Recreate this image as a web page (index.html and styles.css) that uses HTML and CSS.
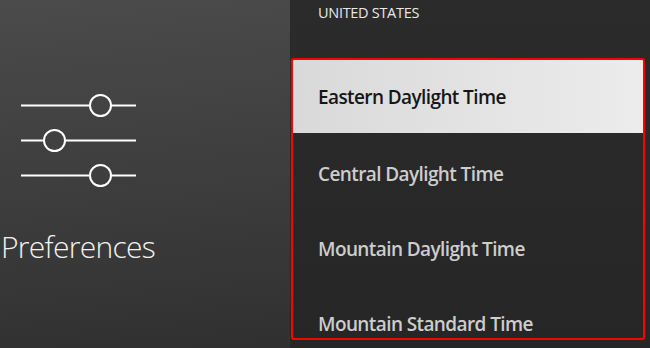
FILE: index.html
```html
<!DOCTYPE html>
<html>
<head>
<meta charset="utf-8">
<link rel="stylesheet" href="styles.css">
</head>
<body>
<div class="screen">
  <div class="side">
    <svg class="icon" width="140" height="100" viewBox="0 0 140 100">
      <g fill="none" stroke="#ffffff" stroke-width="2">
        <line x1="21" y1="15.5" x2="89.5" y2="15.5"/>
        <line x1="111.5" y1="15.5" x2="136" y2="15.5"/>
        <circle cx="100.5" cy="15.5" r="10.5"/>
        <line x1="21" y1="50.5" x2="44" y2="50.5"/>
        <line x1="65" y1="50.5" x2="136" y2="50.5"/>
        <circle cx="54.5" cy="50.5" r="10.5"/>
        <line x1="21" y1="85.5" x2="89.5" y2="85.5"/>
        <line x1="111.5" y1="85.5" x2="136" y2="85.5"/>
        <circle cx="100.5" cy="85.5" r="10.5"/>
      </g>
    </svg>
    <div class="title">Preferences</div>
  </div>
  <div class="main">
    <div class="region">UNITED STATES</div>
    <div class="list">
      <div class="item selected">Eastern Daylight Time</div>
      <div class="item">Central Daylight Time</div>
      <div class="item">Mountain Daylight Time</div>
      <div class="item">Mountain Standard Time</div>
    </div>
  </div>
</div>
</body>
</html>
```
FILE: styles.css
```css
html, body {
  margin: 0;
  padding: 0;
  width: 650px;
  height: 348px;
  overflow: hidden;
  background: #272727;
}
.screen {
  display: flex;
  width: 650px;
  height: 348px;
  font-family: "Open Sans", "Noto Sans", sans-serif;
}
.side {
  width: 290px;
  flex: none;
  background: linear-gradient(175deg, #4b4b4b 0%, #3e3e3e 50%, #303030 100%);
  display: flex;
  flex-direction: column;
  align-items: flex-start;
  padding-top: 90px;
  box-sizing: border-box;
}
.icon {
  display: block;
  flex: none;
}
.title {
  flex: none;
  margin-top: 39px;
  margin-left: 1px;
  font-size: 30px;
  font-weight: 300;
  color: #f2f2f2;
  line-height: 36px;
  letter-spacing: -0.7px;
}
.main {
  flex: 1;
  display: flex;
  flex-direction: column;
  background: linear-gradient(180deg, #2b2b2b 0%, #262626 100%);
}
.region {
  flex: none;
  padding: 3px 0 0 28px;
  height: 58px;
  box-sizing: border-box;
  font-size: 14.5px;
  line-height: 20px;
  color: #e8e8e8;
  letter-spacing: -0.3px;
}
.list {
  flex: none;
  margin-left: 1px;
  width: 354px;
  height: 282px;
  box-sizing: border-box;
  border: 2px solid #ff0000;
  border-radius: 3px;
  overflow: hidden;
}
.item {
  height: 73px;
  margin-bottom: 2px;
  box-sizing: border-box;
  padding: 26px 0 0 25px;
  font-size: 19px;
  line-height: 26px;
  font-weight: 600;
  color: #cdcdcd;
  letter-spacing: -0.6px;
  white-space: nowrap;
}
.item.selected {
  padding-top: 24px;
  background: linear-gradient(90deg, #d9d9d9 0%, #ececec 100%);
  color: #161616;
}
```
